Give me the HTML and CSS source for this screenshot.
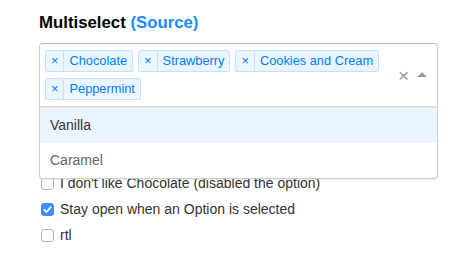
FILE: index.html
```html
<!DOCTYPE html>
<html>
<head>
<meta charset="utf-8">
<link rel="stylesheet" href="styles.css">
</head>
<body>
<div class="page">
  <h3 class="heading">Multiselect <a class="source">(Source)</a></h3>
  <div class="select">
    <div class="control">
      <div class="values">
        <span class="tag"><span class="tag-x">×</span><span class="tag-label">Chocolate</span></span>
        <span class="tag"><span class="tag-x">×</span><span class="tag-label">Strawberry</span></span>
        <span class="tag"><span class="tag-x">×</span><span class="tag-label">Cookies and Cream</span></span>
        <span class="tag"><span class="tag-x">×</span><span class="tag-label">Peppermint</span></span>
      </div>
      <span class="clear">×</span>
      <span class="arrow-zone"><span class="arrow"></span></span>
    </div>
    <div class="menu">
      <div class="option focused">Vanilla</div>
      <div class="option">Caramel</div>
    </div>
  </div>
  <div class="checks">
    <label class="check"><span class="box"></span>I don't like Chocolate (disabled the option)</label>
    <label class="check"><span class="box checked"><svg width="13" height="13" viewBox="0 0 13 13"><path d="M3.3 6.8 L5.5 9 L9.6 4.2" fill="none" stroke="#fff" stroke-width="1.7" stroke-linecap="round" stroke-linejoin="round"/></svg></span>Stay open when an Option is selected</label>
    <label class="check"><span class="box"></span>rtl</label>
  </div>
</div>
</body>
</html>
```
FILE: styles.css
```css
html, body {
  margin: 0;
  padding: 0;
  background: #fff;
}
body {
  font-family: "Liberation Sans", Arial, sans-serif;
  color: #333;
  font-size: 14px;
}
.page {
  padding: 13px 0 0 39px;
}
.heading {
  margin: 0 0 10px;
  font-size: 16.8px;
  line-height: 20px;
  font-weight: bold;
  color: #000;
}
.source {
  color: #1a8cff;
  text-decoration: none;
}
.select {
  position: relative;
  width: 399px;
}
.control {
  display: flex;
  align-items: center;
  border: 1px solid #ccc;
  border-color: #b3b3b3 #ccc #d9d9d9;
  border-radius: 4px 4px 0 0;
  background: #fff;
}
.values {
  flex: 1;
  display: flex;
  flex-wrap: wrap;
  align-items: flex-start;
  padding-bottom: 6px;
}
.tag {
  display: flex;
  box-sizing: border-box;
  height: 22px;
  margin: 6px 0 0 5px;
  border: 1px solid #c2e0ff;
  border-radius: 2px;
  background: #ebf5ff;
  color: #007eff;
  font-size: 12.8px;
  line-height: 20px;
}
.tag-x {
  padding: 0 5px;
  border-right: 1px solid #c2e0ff;
}
.tag-label {
  padding: 0 5px;
}
.clear {
  width: 17px;
  text-align: center;
  color: #999;
  font-size: 19px;
  line-height: 1;
}
.arrow-zone {
  box-sizing: border-box;
  width: 25px;
  padding-right: 5px;
  display: flex;
  justify-content: center;
  align-items: center;
}
.arrow {
  width: 0;
  height: 0;
  border-style: solid;
  border-width: 0 5px 5px;
  border-color: transparent transparent #999;
  margin-top: -2px;
}
.menu {
  position: absolute;
  top: 100%;
  left: 0;
  right: 0;
  border: 1px solid #ccc;
  border-top-color: #e6e6e6;
  border-radius: 0 0 4px 4px;
  background: #fff;
  box-shadow: 0 1px 0 rgba(0, 0, 0, 0.06);
}
.option {
  padding: 8px 10px;
  line-height: 19px;
  color: #666;
  font-size: 14px;
}
.option.focused {
  background: #ebf5ff;
  color: #333;
}
.checks {
  margin-top: 63px;
}
.check {
  display: flex;
  align-items: center;
  height: 26px;
  font-size: 14px;
  color: #333;
}
.box {
  box-sizing: border-box;
  width: 13px;
  height: 13px;
  margin: 0 6px 0 2px;
  border: 1px solid #b4b4b4;
  border-radius: 3px;
  background: #fff;
  display: flex;
}
.box.checked {
  border-color: #3b8df7;
  background: #3d90f7;
}
.box svg {
  margin: -1px;
}
```
